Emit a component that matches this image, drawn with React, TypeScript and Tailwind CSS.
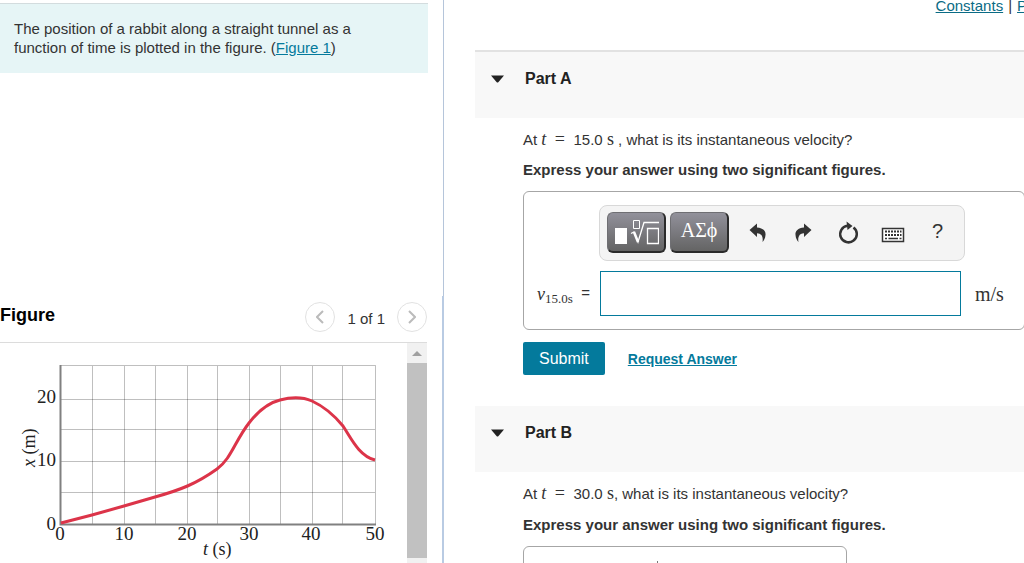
import type { ReactNode } from 'react';

const gridX = [92, 124, 155, 187, 217, 249, 280, 312, 342];
const gridY = [56, 86, 118, 149];

const xTicks = [
  { x: 60, label: '0' },
  { x: 124, label: '10' },
  { x: 187, label: '20' },
  { x: 249, label: '30' },
  { x: 311, label: '40' },
  { x: 375, label: '50' },
];

const yTicks = [
  { y: 60, label: '20' },
  { y: 123, label: '10' },
  { y: 187, label: '0' },
];

function PositionChart() {
  return (
    <svg
      width="407"
      height="220"
      viewBox="0 0 407 220"
      className="shrink-0 font-['Liberation_Serif',serif]"
      role="img"
      aria-label="Position x in meters against time t in seconds"
    >
      <g stroke="#000" strokeOpacity="0.25" fill="none">
        {gridX.map(x => (
          <path key={x} d={`M${x + 0.5} 23V181`} />
        ))}
        {gridY.map(y => (
          <path key={y} d={`M60 ${y + 0.5}H375`} />
        ))}
        <path d="M60 22.5H375.5V181" />
      </g>
      <path d="M60.5 22V181.5H376" fill="none" stroke="#808080" strokeWidth="2" />
      <path
        d="M61 180L92 172L124 163L155 154C180 147 196 141 217 126C231 116 235 98 249 80C259 67 268 60 280 57C291 54 303 54 312 58C325 64 334 72 343 83C351 95 359 113 375 117"
        fill="none"
        stroke="#dc3449"
        strokeWidth="3"
      />
      <g fill="#222" fontSize="19">
        {xTicks.map(t => (
          <text key={t.label} x={t.x} y="197" textAnchor="middle">{t.label}</text>
        ))}
        {yTicks.map(t => (
          <text key={t.label} x="56" y={t.y} textAnchor="end">{t.label}</text>
        ))}
        <text x="203" y="212" fontSize="18">
          <tspan fontStyle="italic">t</tspan> (s)
        </text>
        <text transform="translate(35 124) rotate(-90)" fontSize="18">
          <tspan fontStyle="italic">x</tspan> (m)
        </text>
      </g>
    </svg>
  );
}

function PartHeader({ title, first }: { title: string; first?: boolean }) {
  return (
    <header
      className={
        first
          ? 'h-[68px] border-t-2 border-[#e2e2e2] bg-[#f8f8f8]'
          : 'h-[66px] bg-[#f8f8f8]'
      }
    >
      <button type="button" className="flex h-[54px] items-center pl-4 text-base font-bold text-[#222]">
        <svg width="13" height="8" viewBox="0 0 13 8" className="mr-[21px]" aria-hidden="true">
          <path d="M0 0.5H13L7.5 7Q6.5 8 5.5 7Z" fill="#222" />
        </svg>
        {title}
      </button>
    </header>
  );
}

function Question({ value, tail }: { value: string; tail: string }) {
  return (
    <p className="leading-5">
      At <i className="font-['Liberation_Serif',serif] text-lg leading-5">t</i>
      <span className="mx-1 font-['Liberation_Serif',serif] text-lg leading-5"> = </span>
      {value} <span className="font-['Liberation_Serif',serif] text-lg leading-5">s</span>
      {tail}
    </p>
  );
}

function ToolButton({ label, children }: { label: string; children: ReactNode }) {
  return (
    <button
      type="button"
      aria-label={label}
      className="flex h-10 w-[45px] items-center justify-center text-[#333]"
    >
      {children}
    </button>
  );
}

const darkButton =
  'flex h-[41px] w-[59px] items-center justify-center rounded-md border border-r-2 border-b-2 border-[#6f6f73] border-r-[#2b2b2b] border-b-[#2b2b2b] bg-linear-to-b from-[#92919b] to-[#646464] text-white';

function Toolbar() {
  return (
    <div className="mr-[59px] ml-[75px] flex h-14 items-center overflow-hidden rounded-lg border border-[#d8d8d8] bg-[#f4f4f4] pb-px pl-[7px]">
      <button type="button" aria-label="Templates" className={darkButton}>
        <svg width="46" height="28" viewBox="0 0 46 28" fill="none" stroke="#fff">
          <path d="M2 10H14V26H2Z" fill="#fff" stroke="none" />
          <path d="M20.5 2.5H26.5V10.5H20.5Z" />
          <path d="M18 15.5L21 14L25 24L31 4.5H46" strokeWidth="1.3" />
          <path d="M21 14L25 24" strokeWidth="2.5" />
          <path d="M34.5 10.5H45.5V25.5H34.5Z" strokeWidth="1.3" />
        </svg>
      </button>
      <button
        type="button"
        className={`${darkButton} ml-1 pb-1 font-['Liberation_Serif',serif] text-xl`}
      >
        ΑΣϕ
      </button>
      <div className="ml-[6px] flex">
        <ToolButton label="Undo">
          <svg width="18" height="20" viewBox="0 0 18 20" fill="currentColor">
            <path d="M0.5 7L8 0.5V4.5C14 5 17 8 16.5 12C16.3 15 15 17.5 13.5 19C14.3 14 13 10.5 8 10.2V14Z" />
          </svg>
        </ToolButton>
        <ToolButton label="Redo">
          <svg width="18" height="20" viewBox="0 0 18 20" fill="currentColor">
            <path d="M17.5 7L10 0.5V4.5C4 5 1 8 1.5 12C1.7 15 3 17.5 4.5 19C3.7 14 5 10.5 10 10.2V14Z" />
          </svg>
        </ToolButton>
        <ToolButton label="Reset">
          <svg width="22" height="24" viewBox="0 0 22 24">
            <path d="M16.5 6.4A8.3 8.3 0 1 1 10.5 4.8" fill="none" stroke="currentColor" strokeWidth="2.5" />
            <path d="M9.5 0.5L15.5 5L10.5 9Z" fill="currentColor" />
          </svg>
        </ToolButton>
        <ToolButton label="Keyboard">
          <svg width="24" height="16" viewBox="0 0 24 16" className="mt-1">
            <path d="M1.5 1.5H22.5V14.5H1.5Z" fill="#fff" stroke="currentColor" strokeWidth="1.5" />
            <path d="M4 4.5H20.5" stroke="currentColor" strokeWidth="2" strokeDasharray="2 1" />
            <path d="M4 8H20.5" stroke="currentColor" strokeWidth="2" strokeDasharray="2 1" />
            <path d="M4 11.5H6M7.5 11.5H17M18.5 11.5H20.5" stroke="currentColor" strokeWidth="1.5" />
          </svg>
        </ToolButton>
        <ToolButton label="Help">
          <span className="pb-1 text-xl">?</span>
        </ToolButton>
      </div>
    </div>
  );
}

export default function App() {
  return (
    <div className="grid h-screen grid-cols-[444fr_580fr] overflow-hidden bg-white font-['Liberation_Sans',Arial,sans-serif] text-[15px] text-[#333]">
      {/* Problem statement and figure */}
      <aside className="flex min-w-0 flex-col">
        <section className="h-[296px] border-r border-[#b5c5da] pt-[3px] pr-[15px]">
          <div className="border-t border-[#d3dcde] bg-[#e6f5f6] px-[14px] pt-[15px] pb-4 leading-[19px]">
            <p className="max-w-[360px]">
              The position of a rabbit along a straight tunnel as a function of time is plotted in
              the figure. (<a href="#figure" className="text-[#047a9c] underline">Figure 1</a>)
            </p>
          </div>
        </section>

        <section id="figure" className="flex min-h-0 flex-1 flex-col border-r-2 border-[#b9cbe3] pr-[15px]">
          <div className="flex h-[47px] shrink-0 items-center border-b border-[#dcdcdc]">
            <h2 className="pb-2 text-lg font-bold text-black">Figure</h2>
            <nav className="ml-auto flex items-center gap-3 pb-1">
              <button
                type="button"
                aria-label="Previous figure"
                className="flex size-[30px] items-center justify-center rounded-full border border-[#e2e2e2]"
              >
                <svg width="8" height="14" viewBox="0 0 8 14" fill="none" stroke="#bbb" strokeWidth="2">
                  <path d="M7 1L1 7L7 13" />
                </svg>
              </button>
              <span className="pt-1">1 of 1</span>
              <button
                type="button"
                aria-label="Next figure"
                className="flex size-[30px] items-center justify-center rounded-full border border-[#e2e2e2]"
              >
                <svg width="8" height="14" viewBox="0 0 8 14" fill="none" stroke="#bbb" strokeWidth="2">
                  <path d="M1 1L7 7L1 13" />
                </svg>
              </button>
            </nav>
          </div>
          <div className="flex min-h-0 flex-1 overflow-hidden">
            <div className="min-w-0 flex-1 overflow-hidden">
              <PositionChart />
            </div>
            <div className="flex w-5 flex-col bg-[#f1f1f1] pb-[5px]">
              <div className="flex h-5 items-center justify-center">
                <svg width="10" height="5" viewBox="0 0 10 5" aria-hidden="true">
                  <path d="M0 5L5 0L10 5Z" fill="#a0a0a0" />
                </svg>
              </div>
              <div className="flex-1 bg-[#c1c1c1]" />
            </div>
          </div>
        </section>
      </aside>

      {/* Questions */}
      <main className="min-w-0 overflow-hidden pl-[31px]">
        <nav className="-mr-[87px] flex h-[50px] justify-end gap-[5px] leading-3 whitespace-nowrap">
          <a href="#constants" className="text-[#0a6b85] underline">Constants</a>
          <span>|</span>
          <a href="#periodic-table" className="text-[#0a6b85] underline">Periodic Table</a>
        </nav>

        <section>
          <PartHeader title="Part A" first />
          <div className="pt-[11px] pl-12">
            <Question value="15.0" tail=" , what is its instantaneous velocity?" />
            <p className="mt-[10px] leading-5 font-bold">
              Express your answer using two significant figures.
            </p>
            <div className="-mr-px mt-[11px] rounded-md border border-[#a6a6a6] pt-[13px] pb-[13px]">
              <Toolbar />
              <div className="mt-[10px] flex items-center">
                <label
                  htmlFor="velocity-a"
                  className="flex w-[76px] shrink-0 items-center justify-between pr-[10px] pl-[13px]"
                >
                  <span className="font-['Liberation_Serif',serif]">
                    <i className="text-lg">v</i>
                    <sub className="text-[13px]">15.0s</sub>
                  </span>
                  <span>=</span>
                </label>
                <input
                  id="velocity-a"
                  type="text"
                  className="h-[45px] min-w-0 flex-1 border border-[#047a9c] bg-white px-2 outline-none"
                />
                <span className="w-[63px] pl-[14px] font-['Liberation_Serif',serif] text-xl">m/s</span>
              </div>
            </div>
            <div className="mt-3 flex items-center">
              <button
                type="button"
                className="h-[33px] rounded-xs bg-[#047a9c] px-4 text-base text-white"
              >
                Submit
              </button>
              <a href="#answer" className="ml-[23px] text-sm font-bold text-[#047a9c] underline">
                Request Answer
              </a>
            </div>
          </div>
        </section>

        <section className="mt-[31px]">
          <PartHeader title="Part B" />
          <div className="pt-[11px] pl-12">
            <Question value="30.0" tail=", what is its instantaneous velocity?" />
            <p className="mt-[11px] leading-5 font-bold">
              Express your answer using two significant figures.
            </p>
            <div className="mt-[11px] h-[140px] w-[324px] rounded-md border border-[#a6a6a6] pt-[14px] pl-[133px]">
              <div className="h-10 w-px bg-[#777]" />
            </div>
          </div>
        </section>
      </main>
    </div>
  );
}
